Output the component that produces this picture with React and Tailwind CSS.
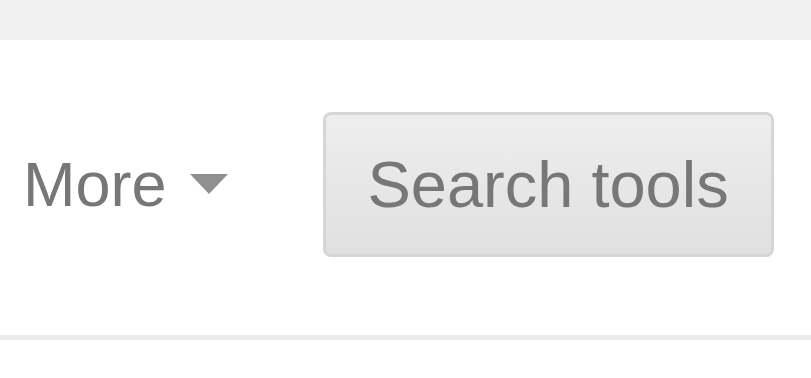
import React from "react";

const App = () => {
  return (
    <div className="w-[811px] h-[378px] bg-white overflow-hidden font-['Liberation_Sans',Arial,sans-serif]">
      <div className="h-[40px] bg-[#f1f1f1]" />
      <div className="h-[295px] flex items-center pl-[23px]">
        <div className="flex items-center mt-[-6px] text-[#777777] text-[63px] leading-none cursor-pointer">
          <span>More</span>
          <span className="ml-[23px] mt-[-2px] w-0 h-0 border-l-[19px] border-r-[19px] border-t-[20px] border-l-transparent border-r-transparent border-t-[#909090]" />
        </div>
        <button className="ml-[95px] h-[145px] w-[451px] mt-[-6px] rounded-[8px] border-[3px] border-[#d6d6d6] bg-linear-to-b from-[#eeeeee] to-[#e0e0e0] text-[#777777] text-[65px] leading-none flex items-center justify-center">
          Search tools
        </button>
      </div>
      <div className="h-[5px] bg-[#ebebeb]" />
    </div>
  );
};

export default App;
